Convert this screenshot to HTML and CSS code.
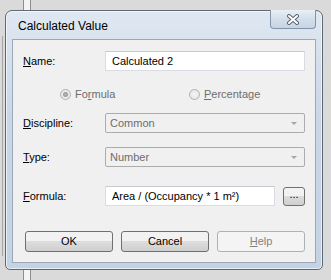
FILE: index.html
```html
<!DOCTYPE html>
<html lang="en">
<head>
    <meta charset="UTF-8">
    <link rel="stylesheet" href="styles.css">
    <title>Calculated Value</title>
</head>
<body>

<div class="desktop">
    <div class="backBar"></div>
    <div class="backEdge"></div>

    <div class="dialog">
        <div class="titleBar">
            <span class="title">Calculated Value</span>
            <div class="closeButton">
                <svg width="14" height="11" viewBox="0 0 14 11">
                    <path d="M3 2 L11 9 M11 2 L3 9" stroke="#5b6572" stroke-width="4" stroke-linecap="round"/>
                    <path d="M3 2 L11 9 M11 2 L3 9" stroke="#ffffff" stroke-width="2" stroke-linecap="round"/>
                </svg>
            </div>
        </div>

        <div class="client">
            <div class="row nameRow">
                <label class="fieldLabel"><u>N</u>ame:</label>
                <div class="textBox">Calculated 2</div>
            </div>

            <div class="radioRow">
                <span class="radioItem first"><span class="radio checked"></span>Fo<u>r</u>mula</span>
                <span class="radioItem"><span class="radio"></span><u>P</u>ercentage</span>
            </div>

            <div class="row disciplineRow">
                <label class="fieldLabel"><u>D</u>iscipline:</label>
                <div class="combo">Common<span class="arrow"></span></div>
            </div>

            <div class="row typeRow">
                <label class="fieldLabel"><u>T</u>ype:</label>
                <div class="combo">Number<span class="arrow"></span></div>
            </div>

            <div class="row formulaRow">
                <label class="fieldLabel"><u>F</u>ormula:</label>
                <div class="textBox formulaBox">Area / (Occupancy * 1 m²)</div>
                <div class="browseButton">...</div>
            </div>

            <div class="buttonRow">
                <div class="button">OK</div>
                <div class="button">Cancel</div>
                <div class="button disabled"><u>H</u>elp</div>
            </div>
        </div>
    </div>
</div>

</body>
</html>
```

FILE: styles.css
```css
body {
    margin: 0;
    background-color: #dadada;
    font-family: "Liberation Sans", Arial, sans-serif;
    font-size: 11px;
}

.desktop {
    position: relative;
    width: 331px;
    height: 280px;
    overflow: hidden;
    padding-top: 10px;
    box-sizing: border-box;
}

/* things sitting behind the dialog */
.backBar {
    position: absolute;
    left: 23px;
    top: 0;
    width: 6px;
    height: 280px;
    border-left: 1px solid #8e8e8e;
    border-right: 1px solid #8e8e8e;
    background-color: #f4f4f4;
}

.backEdge {
    position: absolute;
    left: 2px;
    top: 36px;
    width: 1px;
    height: 220px;
    background-color: #a6a6a6;
}

.dialog {
    position: relative;
    margin-left: 5px;
    width: 318px;
    height: 260px;
    box-sizing: border-box;
    border: 1px solid #5f6873;
    border-radius: 7px 7px 5px 5px;
    background: linear-gradient(#dfe8f2, #c9d7e7 40%, #c4d3e4);
    padding: 0 6px 6px 6px;
    box-shadow: inset 0 0 0 1px rgba(255, 255, 255, 0.6);
}

.titleBar {
    position: relative;
    height: 28px;
}

.title {
    position: absolute;
    left: 6px;
    top: 8px;
    font-size: 12px;
    color: #000;
}

.closeButton {
    position: absolute;
    right: 0;
    top: -1px;
    width: 44px;
    height: 18px;
    border: 1px solid #8394a9;
    border-top: none;
    border-radius: 0 0 4px 4px;
    background: linear-gradient(#e9eff6, #d3dfeb 50%, #c6d4e4);
    display: flex;
    align-items: center;
    justify-content: center;
}

.client {
    height: 224px;
    box-sizing: border-box;
    border: 1px solid #9aa8b8;
    background-color: #f0f0f0;
    padding: 11px 10px 0 10px;
}

.row {
    display: flex;
    align-items: center;
    height: 20px;
}

.fieldLabel {
    width: 82px;
    color: #000;
}

.textBox {
    width: 200px;
    height: 20px;
    box-sizing: border-box;
    border: 1px solid #d9dde3;
    border-top-color: #c6cbd1;
    background-color: #fff;
    padding: 0 6px;
    line-height: 18px;
    color: #000;
}

.formulaBox {
    width: 170px;
}

.browseButton {
    margin-left: 8px;
    width: 22px;
    height: 19px;
    box-sizing: border-box;
    border: 1px solid #707070;
    border-radius: 3px;
    background: linear-gradient(#f2f2f2 50%, #dcdcdc 50%, #cfcfcf);
    text-align: center;
    line-height: 13px;
    color: #000;
}

.radioRow {
    display: flex;
    align-items: center;
    height: 20px;
    margin-top: 13px;
    color: #6d6d6d;
}

.radioItem {
    display: flex;
    align-items: center;
}

.radioItem.first {
    margin-left: 37px;
    width: 129px;
}

.radio {
    width: 11px;
    height: 11px;
    box-sizing: border-box;
    border: 1px solid #b1b1b1;
    border-radius: 50%;
    background: radial-gradient(#f4f4f4, #e2e2e2);
    margin-right: 4px;
    position: relative;
}

.radio.checked::after {
    content: "";
    position: absolute;
    left: 2px;
    top: 2px;
    width: 5px;
    height: 5px;
    border-radius: 50%;
    background: radial-gradient(#b8b8b8, #8a8a8a);
}

.disciplineRow {
    margin-top: 9px;
}

.typeRow {
    margin-top: 14px;
}

.formulaRow {
    margin-top: 19px;
}

.combo {
    position: relative;
    width: 200px;
    height: 20px;
    box-sizing: border-box;
    border: 1px solid #acacac;
    border-radius: 2px;
    background-color: #f0f0f0;
    padding: 0 4px;
    line-height: 18px;
    color: #6d6d6d;
}

.arrow {
    position: absolute;
    right: 7px;
    top: 8px;
    width: 0;
    height: 0;
    border-left: 3px solid transparent;
    border-right: 3px solid transparent;
    border-top: 3px solid #a5a5a5;
}

.buttonRow {
    display: flex;
    gap: 8px;
    margin-top: 25px;
    margin-left: 2px;
}

.button {
    width: 88px;
    height: 21px;
    box-sizing: border-box;
    border: 1px solid #707070;
    border-radius: 3px;
    background: linear-gradient(#f2f2f2 45%, #dddddd 50%, #cfcfcf);
    text-align: center;
    line-height: 19px;
    color: #000;
}

.button.disabled {
    border-color: #adb2b5;
    background: #f4f4f4;
    color: #838383;
}
```
